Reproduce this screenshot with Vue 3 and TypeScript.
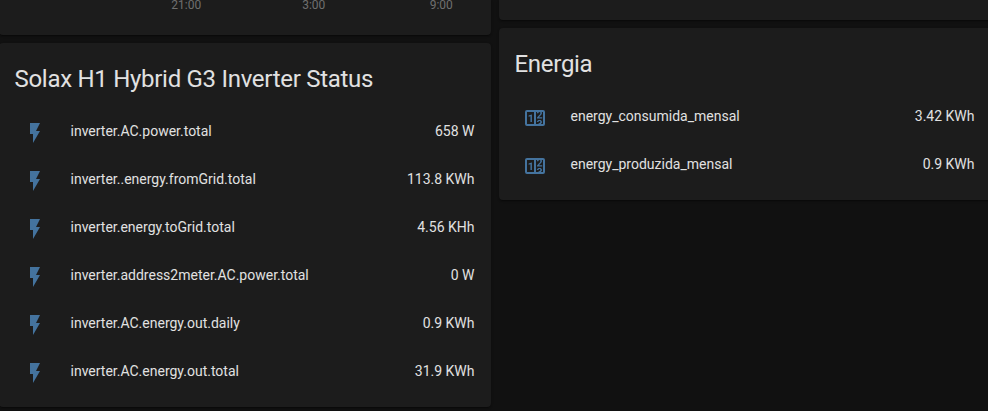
<template>
  <div class="dashboard">
    <div class="column">
      <div class="card chart-stub">
        <div class="axis">
          <span v-for="tick in ticks" :key="tick">{{ tick }}</span>
        </div>
      </div>
      <section class="card">
        <h2 class="card-title">Solax H1 Hybrid G3 Inverter Status</h2>
        <div class="rows">
          <div v-for="row in inverterRows" :key="row.name" class="row">
            <span class="badge">
              <svg viewBox="0 0 24 24"><path :d="flashIcon" /></svg>
            </span>
            <span class="name">{{ row.name }}</span>
            <span class="value">{{ row.value }}</span>
          </div>
        </div>
      </section>
    </div>
    <div class="column">
      <div class="card top-stub"></div>
      <section class="card">
        <h2 class="card-title">Energia</h2>
        <div class="rows">
          <div v-for="row in energyRows" :key="row.name" class="row">
            <span class="badge">
              <svg viewBox="0 0 24 24"><path :d="counterIcon" /></svg>
            </span>
            <span class="name">{{ row.name }}</span>
            <span class="value">{{ row.value }}</span>
          </div>
        </div>
      </section>
    </div>
  </div>
</template>

<script setup lang="ts">
interface Row {
  name: string
  value: string
}

const ticks = ['21:00', '3:00', '9:00']

const flashIcon = 'M7,2V13H10V22L17,10H13L17,2H7Z'
const counterIcon =
  'M4,4H20A2,2 0 0,1 22,6V18A2,2 0 0,1 20,20H4A2,2 0 0,1 2,18V6A2,2 0 0,1 4,4M4,6V18H11V6H4M20,18V6H18.76C19,6.54 18.95,7.07 18.95,7.13C18.88,7.8 18.41,8.5 18.24,8.75L15.91,11.3L19.23,11.28L19.24,12.5L14.04,12.47L14,11.47C14,11.47 17.05,8.24 17.2,7.95C17.34,7.67 17.91,6 16.5,6C15.27,6.05 15.41,7.3 15.41,7.3L13.87,7.31C13.87,7.31 13.88,6.65 14.25,6H13V18H15.58L15.57,17.14L16.54,17.13C16.54,17.13 17.45,16.97 17.46,16.08C17.5,15.08 16.65,15.08 16.5,15.08C16.37,15.08 15.43,15.13 15.43,15.95H13.91C13.91,15.95 13.95,13.89 16.5,13.89C19.1,13.89 18.96,15.91 18.96,15.91C18.96,15.91 19,17.16 17.85,17.63L18.37,18H20M8.92,16H7.42V10.2L5.62,10.76V9.53L8.76,8.41H8.92V16Z'

const inverterRows: Row[] = [
  { name: 'inverter.AC.power.total', value: '658 W' },
  { name: 'inverter..energy.fromGrid.total', value: '113.8 KWh' },
  { name: 'inverter.energy.toGrid.total', value: '4.56 KHh' },
  { name: 'inverter.address2meter.AC.power.total', value: '0 W' },
  { name: 'inverter.AC.energy.out.daily', value: '0.9 KWh' },
  { name: 'inverter.AC.energy.out.total', value: '31.9 KWh' }
]

const energyRows: Row[] = [
  { name: 'energy_consumida_mensal', value: '3.42 KWh' },
  { name: 'energy_produzida_mensal', value: '0.9 KWh' }
]
</script>

<style>
html, body {
  margin: 0;
  height: 100%;
  overflow: hidden;
  background: #111111;
}
</style>

<style scoped>
.dashboard {
  display: grid;
  grid-template-columns: 492px 492px;
  column-gap: 8px;
  margin-left: -1.5px;
  width: 992px;
  height: 411px;
  font-family: Roboto, "Liberation Sans", sans-serif;
  color: #e1e1e1;
  background: #111111;
}

.column {
  display: flex;
  flex-direction: column;
  gap: 8px;
}

.card {
  background: #1c1c1c;
  border-radius: 4px;
  box-shadow: 0 2px 1px -1px rgba(0, 0, 0, 0.2), 0 1px 1px 0 rgba(0, 0, 0, 0.14), 0 1px 3px 0 rgba(0, 0, 0, 0.12);
}

.chart-stub {
  height: 35px;
  border-radius: 0 0 4px 4px;
  box-sizing: border-box;
}

.axis {
  display: flex;
  padding-left: 124px;
  font-size: 12px;
  line-height: 10px;
  color: #6f6f6f;
}

.axis span {
  flex: none;
  width: 127.5px;
  text-align: center;
}

.top-stub {
  height: 20px;
  border-radius: 0 0 4px 4px;
}

.card-title {
  margin: 0;
  height: 52px;
  box-sizing: border-box;
  padding: 20px 16px 0;
  font-size: 24px;
  font-weight: 400;
  line-height: 32px;
  letter-spacing: -0.288px;
}

.rows {
  display: flex;
  flex-direction: column;
  gap: 8px;
  padding: 16px;
}

.row {
  display: flex;
  align-items: center;
  height: 40px;
  font-size: 14px;
}

.badge {
  display: flex;
  align-items: center;
  justify-content: center;
  flex: none;
  width: 40px;
  height: 40px;
}

.badge svg {
  width: 24px;
  height: 24px;
  margin: 4px 0 0 1px;
  fill: #44739e;
}

.name {
  flex: 1;
  margin-left: 16px;
}
</style>
